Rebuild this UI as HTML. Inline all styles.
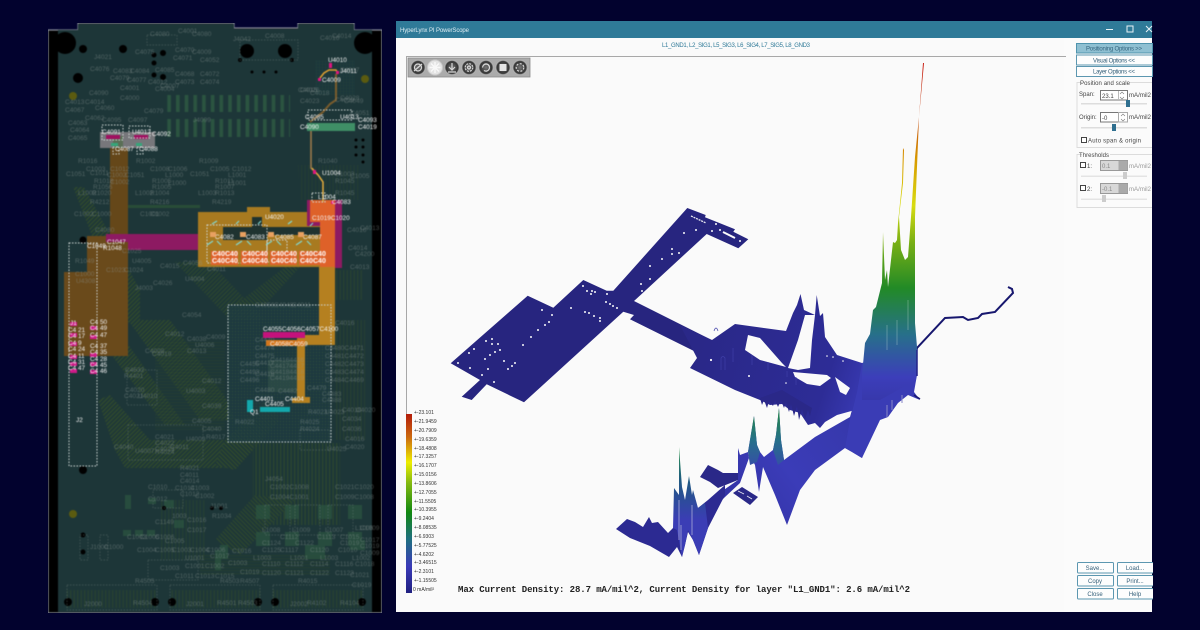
<!DOCTYPE html>
<html><head><meta charset="utf-8"><style>
html,body{margin:0;padding:0;width:1200px;height:630px;overflow:hidden;background:#02022e}
svg{display:block}
text{font-family:"Liberation Sans",sans-serif}
.f text{font-size:6.6px;fill:#8d9a96;fill-opacity:.45}
.w text{font-size:6.4px;fill:#f4f4f4}
.d{fill:none;stroke:#d0d8d6;stroke-width:1;stroke-dasharray:1.5 1.5}
.dg{fill:none;stroke:#75857f;stroke-width:.7;stroke-dasharray:1.5 1.5;opacity:.5}
.b{fill:#fdfdfd;stroke:#5c97b0;stroke-width:1}
.t{font-size:6px;fill:#35607a;text-anchor:middle}
.s{font-size:6px;fill:#444}
.l{font-size:5px;fill:#333}
.h circle{fill:#fafafa}
</style></head><body>
<svg width="1200" height="630" viewBox="0 0 1200 630" xmlns="http://www.w3.org/2000/svg">
<defs>
<filter id="soft" x="0" y="0" width="100%" height="100%" color-interpolation-filters="sRGB"><feGaussianBlur stdDeviation=".4"/></filter>
<pattern id="dg" width="3" height="3" patternUnits="userSpaceOnUse" patternTransform="rotate(45)"><rect width="3" height="3" fill="#1d3638"/><rect width="1.3" height="3" fill="#3f5a25"/></pattern>
<pattern id="dg2" width="3" height="3" patternUnits="userSpaceOnUse" patternTransform="rotate(-45)"><rect width="3" height="3" fill="#1d3638"/><rect width="1.3" height="3" fill="#3f5a25"/></pattern>
<pattern id="vs" width="3.5" height="4" patternUnits="userSpaceOnUse"><rect width="3.5" height="4" fill="#1d3638"/><rect width="1.4" height="4" fill="#3f5a25"/></pattern>
<pattern id="hs" width="4" height="3" patternUnits="userSpaceOnUse"><rect width="4" height="3" fill="#1d3638"/><rect width="4" height="1.3" fill="#3a5526"/></pattern>
<pattern id="dots" width="3" height="3" patternUnits="userSpaceOnUse"><rect width="3" height="3" fill="#1d3a40"/><circle cx="1.5" cy="1.5" r=".7" fill="#2c4a3e"/></pattern>
<pattern id="bars" width="8.7" height="20" patternUnits="userSpaceOnUse"><rect width="8.7" height="20" fill="#1d3638"/><rect x="2" width="3.6" height="20" fill="#2b5440"/></pattern>
<linearGradient id="leg" x1="0" y1="0" x2="0" y2="1">
<stop offset="0" stop-color="#b31c0a"/><stop offset=".13" stop-color="#cc6a10"/><stop offset=".27" stop-color="#eeee00"/><stop offset=".38" stop-color="#88bb10"/><stop offset=".55" stop-color="#118811"/><stop offset=".7" stop-color="#1f6f80"/><stop offset=".85" stop-color="#3a3ab8"/><stop offset="1" stop-color="#202080"/></linearGradient>
<linearGradient id="sp" gradientUnits="userSpaceOnUse" x1="0" y1="63" x2="0" y2="420">
<stop offset="0" stop-color="#c81a10"/><stop offset=".14" stop-color="#c0400f"/><stop offset=".27" stop-color="#d89a00"/><stop offset=".4" stop-color="#d8dc10"/><stop offset=".5" stop-color="#7ab014"/><stop offset=".63" stop-color="#228a26"/><stop offset=".76" stop-color="#27708a"/><stop offset=".88" stop-color="#3c3eba"/><stop offset="1" stop-color="#33339f"/></linearGradient>
<linearGradient id="sp2" gradientUnits="userSpaceOnUse" x1="0" y1="408" x2="0" y2="480">
<stop offset="0" stop-color="#1f8a3a"/><stop offset=".45" stop-color="#27708a"/><stop offset="1" stop-color="#3b3db5"/></linearGradient>
<linearGradient id="sp3" gradientUnits="userSpaceOnUse" x1="0" y1="447" x2="0" y2="520">
<stop offset="0" stop-color="#2f9a50"/><stop offset=".45" stop-color="#1e5a80"/><stop offset="1" stop-color="#3b3db5"/></linearGradient>
<linearGradient id="mass" gradientUnits="userSpaceOnUse" x1="700" y1="340" x2="880" y2="400">
<stop offset="0" stop-color="#2a2888"/><stop offset=".7" stop-color="#2d2c96"/><stop offset="1" stop-color="#3d3fbe"/></linearGradient>
<linearGradient id="band" gradientUnits="userSpaceOnUse" x1="700" y1="520" x2="860" y2="400">
<stop offset="0" stop-color="#2f2e9c"/><stop offset=".5" stop-color="#3b3cb8"/><stop offset="1" stop-color="#3537a8"/></linearGradient>
<radialGradient id="ico" cx=".5" cy=".5" r=".5"><stop offset="0" stop-color="#777"/><stop offset=".8" stop-color="#333"/><stop offset="1" stop-color="#c8c8c8"/></radialGradient>
</defs>
<rect width="1200" height="630" fill="#02022e"/>

<!-- PCB -->
<g filter="url(#soft)">
<path d="M48 30H78V23H234V28H298V23H354V30H382V613H48Z" fill="#000" stroke="#8b8f9c" stroke-width="1.2"/>
<path d="M58 30H78V24H234V29H298V24H354V30H372V612H58Z" fill="#1d3638"/>

<g opacity=".6">
<path d="M73 187L84 187L140 290L140 330L125 320Z" fill="url(#dg)"/>
<path d="M128 320L170 320L225 397L235 420L200 420Z" fill="url(#dg)"/>
<path d="M100 340L125 340L185 425L165 425Z" fill="url(#dg)"/>
<path d="M98 400L110 395L150 440L225 440L225 468L125 468L115 450Z" fill="url(#dg)"/>
<path d="M215 465L225 440L266 400L280 420L235 470Z" fill="url(#dg2)"/>
<path d="M253 443H340V525H253Z" fill="url(#vs)" opacity=".7"/>
<path d="M215 540L255 495L295 500L240 555Z" fill="url(#dg2)" opacity=".8"/>
<path d="M175 262L210 262L265 320L230 320Z" fill="url(#dg)" opacity=".7"/>
<path d="M285 267L300 267L265 305L235 305Z" fill="url(#dg2)" opacity=".7"/>
<path d="M335 270H362V300H335Z" fill="url(#vs)" opacity=".5"/>
<path d="M335 320H365V440H335Z" fill="url(#vs)" opacity=".45"/>
<path d="M155 340H225V430H155Z" fill="url(#hs)" opacity=".35"/>
<path d="M67 590H157V608H67ZM170 590H260V608H170ZM273 590H363V608H273Z" fill="url(#vs)" opacity=".5"/>
<path d="M200 555H330V575H200Z" fill="url(#hs)" opacity=".4"/>
<path d="M160 500H205V560H160Z" fill="url(#vs)" opacity=".35"/>
<path d="M298 165L360 165L360 200L300 200Z" fill="url(#vs)" opacity=".28"/>
<path d="M315 60H355V95H315Z" fill="url(#dots)" opacity=".7"/>
<path d="M128 205H200V208H128Z" fill="#3f7a35" opacity=".55"/>
</g>
<rect x="167" y="95" width="123" height="17" fill="url(#bars)"/>
<rect x="167" y="119" width="123" height="18" fill="url(#bars)"/>
<g fill="#2b5440" opacity=".75">
<rect x="256" y="505" width="14" height="14"/><rect x="285" y="505" width="14" height="14"/><rect x="318" y="505" width="14" height="14"/><rect x="348" y="505" width="14" height="14"/>
<rect x="256" y="532" width="14" height="14"/><rect x="285" y="532" width="14" height="14"/><rect x="318" y="532" width="14" height="14"/><rect x="348" y="532" width="14" height="14"/>
<rect x="164" y="500" width="10" height="8"/><rect x="174" y="520" width="10" height="8"/><rect x="125" y="501" width="6" height="8"/><rect x="125" y="495" width="6" height="8"/><rect x="148" y="498" width="8" height="6"/>
<rect x="123" y="530" width="8" height="6"/><rect x="135" y="530" width="8" height="6"/><rect x="147" y="530" width="8" height="6"/>
<rect x="220" y="545" width="8" height="14"/><rect x="215" y="550" width="6" height="20"/><rect x="305" y="545" width="20" height="14"/><rect x="350" y="540" width="15" height="10"/>
</g>
<rect x="228" y="305" width="103" height="137" fill="url(#dots)" opacity=".85"/>
<rect x="268" y="360" width="37" height="32" fill="#3c5c50" opacity=".4"/>

<path d="M64 272H87V236H128V153H110V236H87V272H64V356H128V272Z" fill="#6a4a1b"/>
<rect x="110" y="148" width="18" height="90" fill="#654719"/>
<rect x="87" y="236" width="41" height="40" fill="#6a4a1b"/>
<rect x="64" y="272" width="64" height="84" fill="#6a4a1b"/>
<path d="M106 234H200V250H128V242H106Z" fill="#8d1a62"/>
<rect x="100" y="132" width="55" height="16" fill="#77777b"/>
<rect x="113" y="136" width="10" height="12" fill="#5a6f56"/>
<path d="M198 212H247V207H270V212H320V267H198Z" fill="#a87a20"/>
<path d="M223 227H252V217H262V227H322V235H267V240H223Z" fill="#1f3330"/>
<path d="M307 200H342V268H335V226H307Z" fill="#8d1a62"/>
<path d="M310 200H335V268H320V222H310Z" fill="#de6129"/>
<path d="M319 267H335V345H305V397L310 397V403H292V398H297V335H319Z" fill="#b58020"/>
<rect x="247" y="400" width="6" height="12" fill="#13a8ac"/>
<rect x="260" y="407" width="30" height="5" fill="#13a8ac"/>
<rect x="263" y="332" width="42" height="6" fill="#c4127c"/>
<rect x="266" y="340" width="39" height="6" fill="#d6761a"/>
<rect x="307" y="123" width="48" height="8" fill="#3f8f66"/>
<rect x="106" y="135" width="14" height="4" fill="#a01060"/>
<rect x="134" y="135" width="14" height="4" fill="#a01060"/>
<rect x="111" y="143" width="7" height="3" fill="#35a67a"/>
<rect x="136" y="143" width="6" height="3" fill="#35a67a"/>
<path d="M336 74V100L330 104L323 112L310 122" fill="none" stroke="#7a5c2c" stroke-width="2"/>
<path d="M320 78L324 73L329 70H336L338 74" fill="none" stroke="#e0a030" stroke-width="1.5"/>
<path d="M311 131V168L318 175L323 182V202" fill="none" stroke="#9c7a4a" stroke-width="1.6"/>
<path d="M312 168L319 176L323 182V202" fill="none" stroke="#e8b038" stroke-width="1.2"/>
<g fill="#e0157f"><rect x="329" y="63" width="3" height="5"/><rect x="336" y="71" width="3" height="3"/><rect x="318" y="78" width="3" height="3"/><rect x="313" y="170" width="3" height="4"/><rect x="331" y="201" width="3" height="3"/></g>
<g fill="#cf1a88"><rect x="70" y="322" width="7" height="4"/><rect x="70" y="333" width="7" height="4"/><rect x="70" y="342" width="7" height="4"/><rect x="70" y="355" width="7" height="4"/><rect x="70" y="362" width="7" height="4"/><rect x="70" y="369" width="7" height="4"/><rect x="90" y="326" width="7" height="4"/><rect x="90" y="335" width="7" height="4"/><rect x="90" y="353" width="7" height="4"/><rect x="90" y="362" width="7" height="4"/><rect x="90" y="370" width="7" height="4"/></g>

<g fill="#000">
<circle cx="65" cy="43" r="11"/><circle cx="365" cy="43" r="11"/>
<circle cx="83" cy="49" r="4"/><circle cx="123" cy="49" r="4"/>
<circle cx="247" cy="51" r="7"/><circle cx="285" cy="51" r="7"/>
<circle cx="78" cy="78" r="5"/><circle cx="83" cy="240" r="3.5"/><circle cx="83" cy="470" r="4"/>
<circle cx="68" cy="602" r="4"/><circle cx="155" cy="602" r="4"/><circle cx="172" cy="602" r="4"/><circle cx="258" cy="602" r="4"/><circle cx="275" cy="602" r="4"/><circle cx="362" cy="602" r="4"/>
<circle cx="83" cy="535" r="2.5"/><circle cx="83" cy="552" r="2.5"/>
<circle cx="164" cy="508" r="2"/><circle cx="212" cy="508" r="2"/><circle cx="221" cy="508" r="2"/>
<circle cx="154" cy="55" r="2.5"/><circle cx="154" cy="63" r="2.5"/><circle cx="154" cy="75" r="2.5"/><circle cx="163" cy="53" r="3"/><circle cx="163" cy="77" r="3"/>
<circle cx="240" cy="60" r="2"/><circle cx="292" cy="60" r="2"/>
<circle cx="252" cy="72" r="1.5"/><circle cx="264" cy="72" r="1.5"/><circle cx="276" cy="72" r="1.5"/>
<circle cx="363" cy="140" r="1.5"/><circle cx="363" cy="147" r="1.5"/><circle cx="363" cy="155" r="1.5"/><circle cx="363" cy="162" r="1.5"/><circle cx="356" cy="140" r="1.5"/><circle cx="356" cy="147" r="1.5"/><circle cx="356" cy="155" r="1.5"/>
</g>
<g fill="#5b5b10"><circle cx="73" cy="96" r="4"/><circle cx="73" cy="514" r="4"/><circle cx="365" cy="79" r="4"/></g>

<g class="f">
<text x="150" y="36">C4080</text><text x="178" y="33">C4001</text><text x="192" y="36">C4080</text><text x="233" y="41">J4042</text><text x="265" y="38">C4008</text><text x="320" y="40">C4016</text><text x="332" y="38">C4014</text>
<text x="94" y="59">J4021</text><text x="135" y="54">C4075</text><text x="175" y="52">C4070</text><text x="192" y="54">C4009</text><text x="173" y="60">C4071</text><text x="200" y="62">C4052</text><text x="90" y="71">C4076</text><text x="113" y="73">C4083</text><text x="130" y="73">C4084</text><text x="155" y="72">C4085</text><text x="200" y="76">C4072</text><text x="175" y="76">C4068</text><text x="110" y="80">C4079</text><text x="127" y="82">C4077</text><text x="148" y="84">C4012</text><text x="175" y="84">C4073</text><text x="200" y="84">C4074</text><text x="160" y="88">C4007</text>
<text x="120" y="90">C4001</text><text x="155" y="91">C4004</text><text x="89" y="95">C4090</text><text x="120" y="100">C4000</text><text x="65" y="104">C4013</text><text x="85" y="104">C4014</text><text x="95" y="110">C4060</text><text x="144" y="113">C4079</text><text x="65" y="112">C4067</text><text x="85" y="120">C4062</text><text x="68" y="125">C4063</text><text x="70" y="132">C4064</text><text x="68" y="140">C4065</text><text x="102" y="122">C4095</text><text x="128" y="122">C4097</text><text x="193" y="122">J4099</text>
<text x="298" y="92">C4015</text><text x="310" y="95">C4018</text><text x="340" y="100">C4028</text><text x="300" y="103">C4023</text><text x="335" y="102">C4029</text><text x="344" y="103">C4049</text><text x="350" y="115">C4051</text><text x="300" y="92">C4026</text><text x="340" y="72">C4017</text>
<text x="78" y="163">R1016</text><text x="136" y="163">R1002</text><text x="199" y="163">R1009</text><text x="318" y="163">R1040</text>
<text x="86" y="171">C1003</text><text x="110" y="171">C1012</text><text x="150" y="171">C1008</text><text x="168" y="171">C1006</text><text x="232" y="171">C1012</text><text x="210" y="171">C1005</text>
<text x="66" y="176">C1051</text><text x="90" y="175">C1011</text><text x="107" y="177">C1002</text><text x="125" y="177">C1051</text><text x="165" y="177">L1000</text><text x="190" y="176">C1051</text><text x="228" y="177">L1001</text><text x="335" y="176">C1003</text><text x="350" y="178">C1005</text>
<text x="94" y="183">R1018</text><text x="152" y="183">R1005</text><text x="215" y="183">R1011</text><text x="335" y="183">R1045</text>
<text x="93" y="189">R1056</text><text x="110" y="184">C1002</text><text x="152" y="189">R1005</text><text x="168" y="185">L1000</text><text x="215" y="189">R1007</text><text x="228" y="185">L1001</text>
<text x="78" y="195">L1002</text><text x="92" y="195">R1020</text><text x="135" y="195">L1002</text><text x="150" y="195">R1004</text><text x="198" y="195">L1003</text><text x="215" y="195">R1013</text><text x="335" y="195">R1045</text>
<text x="90" y="204">R4212</text><text x="150" y="204">R4216</text><text x="212" y="204">R4219</text>
<text x="74" y="216">C1002</text><text x="92" y="216">C1000</text><text x="140" y="216">C1001</text><text x="150" y="216">C1002</text>
<text x="347" y="232">C4016</text><text x="360" y="230">C4013</text><text x="95" y="232">C4080</text>
<text x="348" y="250">C4014</text><text x="355" y="256">C4200</text><text x="350" y="269">C4013</text>
<text x="122" y="253">C1025</text><text x="132" y="263">U4005</text><text x="75" y="263">R1049</text><text x="106" y="272">C1023</text><text x="124" y="272">C1024</text>
<text x="75" y="276">C1000</text><text x="76" y="283">U4308</text><text x="160" y="268">C4015</text><text x="183" y="265">C4056</text><text x="207" y="271">C4011</text><text x="185" y="281">U4004</text><text x="153" y="285">C4026</text><text x="135" y="290">J4003</text>
<text x="182" y="317">C4054</text><text x="255" y="307">C4056</text><text x="274" y="307">C4048</text><text x="292" y="307">C4011</text><text x="335" y="325">C4016</text>
<text x="165" y="336">C4012</text><text x="187" y="341">C4038</text><text x="206" y="339">C4009</text><text x="195" y="347">U4006</text><text x="145" y="353">C4008</text><text x="152" y="356">C4019</text><text x="187" y="353">C4013</text>
<text x="255" y="342">C4470</text><text x="255" y="350">C4474</text><text x="255" y="358">C4475</text><text x="255" y="365">C4417</text><text x="240" y="366">C4455</text><text x="240" y="374">C4493</text><text x="255" y="376">C4418</text><text x="240" y="382">C4496</text><text x="255" y="392">C4480</text><text x="278" y="393">C4482</text>
<g opacity=".85"><text x="270" y="362">C44164416</text><text x="270" y="368">C44174417</text><text x="270" y="374">C44184418</text><text x="270" y="380">C44194419</text></g>
<text x="325" y="350">C4480C4471</text><text x="325" y="358">C4481C4472</text><text x="325" y="366">C4482C4473</text><text x="325" y="374">C4483C4474</text><text x="325" y="382">C4484C4469</text><text x="307" y="390">C4479</text><text x="322" y="396">C4483</text><text x="322" y="402">C4488</text>
<text x="125" y="372">C4532</text><text x="124" y="378">R4401</text><text x="125" y="392">C4020</text><text x="124" y="398">C4021</text><text x="138" y="398">U4010</text>
<text x="202" y="383">C4012</text><text x="186" y="393">U4003</text><text x="202" y="408">C4039</text><text x="192" y="423">C4005</text><text x="202" y="431">C4040</text><text x="206" y="439">R4017</text><text x="235" y="424">R4022</text>
<text x="186" y="441">U4009</text><text x="155" y="439">C4021</text><text x="155" y="445">C4022</text><text x="155" y="451">C4023</text><text x="170" y="449">C4011</text><text x="155" y="454">R4024</text><text x="114" y="449">C4040</text><text x="135" y="453">U4007</text>
<text x="308" y="414">R4023</text><text x="325" y="414">U4023</text><text x="342" y="412">C4018</text><text x="356" y="412">C4020</text><text x="300" y="424">R4025</text><text x="300" y="431">R4024</text><text x="342" y="421">C4034</text><text x="342" y="431">C4036</text><text x="345" y="441">C4016</text><text x="345" y="449">C4020</text><text x="327" y="451">U4025</text>
<text x="180" y="470">R4021</text><text x="180" y="477">C4011</text><text x="180" y="483">C4014</text><text x="175" y="490">C1014</text><text x="190" y="490">C1003</text><text x="148" y="489">C1010</text><text x="148" y="501">C1012</text><text x="180" y="496">C1012</text><text x="195" y="498">C1002</text>
<text x="265" y="481">J4054</text><text x="270" y="489">C1002C1008</text><text x="270" y="499">C1004C1001</text><text x="335" y="489">C1021C1020</text><text x="335" y="499">C1009C1008</text>
<text x="210" y="508">J1001</text><text x="212" y="518">R1034</text><text x="172" y="518">1003</text><text x="155" y="524">C1149</text><text x="187" y="522">C1016</text><text x="187" y="532">C1017</text>
<text x="262" y="532">L1008</text><text x="292" y="532">L1009</text><text x="325" y="532">L1007</text><text x="355" y="530">L1006</text><text x="360" y="530">C1009</text>
<text x="90" y="549">J1000</text><text x="104" y="549">C1000</text><text x="127" y="539">C1003</text><text x="140" y="539">C1005</text><text x="155" y="539">C1006</text><text x="165" y="543">C1005</text>
<text x="280" y="539">C1112</text><text x="317" y="539">C1113</text><text x="340" y="539">C1015</text><text x="360" y="542">C1017</text>
<text x="262" y="545">C1124</text><text x="295" y="545">C1122</text><text x="340" y="545">C1019</text><text x="360" y="548">C1019</text>
<text x="262" y="552">C1125</text><text x="280" y="552">C1117</text><text x="310" y="552">C1120</text><text x="338" y="552">C1010</text><text x="360" y="555">C1009</text>
<text x="137" y="552">C1004</text><text x="155" y="552">C1005</text><text x="172" y="552">C1003</text><text x="190" y="552">C1004</text><text x="206" y="552">C1006</text><text x="232" y="553">C1016</text>
<text x="253" y="560">L1003</text><text x="290" y="560">L1001</text><text x="320" y="560">L1003</text><text x="352" y="560">L1002</text><text x="185" y="560">U1001</text><text x="210" y="558">C1017</text>
<text x="160" y="570">C1003</text><text x="185" y="568">C1001</text><text x="205" y="568">C1002</text><text x="228" y="565">C1003</text><text x="262" y="566">C1110</text><text x="285" y="566">C1112</text><text x="310" y="566">C1114</text><text x="335" y="566">C1116</text><text x="355" y="566">C1018</text>
<text x="175" y="578">C1011</text><text x="195" y="578">C1013</text><text x="215" y="578">C1015</text><text x="240" y="574">C1019</text><text x="262" y="575">C1120</text><text x="285" y="575">C1121</text><text x="310" y="575">C1122</text><text x="335" y="575">C1123</text><text x="350" y="577">C1021</text>
<text x="135" y="583">R4505</text><text x="220" y="583">R4503</text><text x="240" y="583">R4507</text><text x="298" y="583">R4015</text><text x="352" y="587">C1019</text>
<text x="84" y="606">J2000</text><text x="133" y="605">R4504</text><text x="186" y="606">J2001</text><text x="217" y="605">R4501</text><text x="238" y="605">R4503</text><text x="290" y="606">J2002</text><text x="307" y="605">R4102</text><text x="340" y="605">R4104</text>
</g>
<g class="dg">
<rect x="67" y="585" width="90" height="25"/><rect x="170" y="585" width="90" height="25"/><rect x="273" y="585" width="90" height="25"/>
<rect x="128" y="425" width="75" height="35"/><rect x="153" y="490" width="30" height="18"/><rect x="265" y="505" width="25" height="30"/><rect x="295" y="505" width="25" height="30"/><rect x="328" y="505" width="25" height="30"/>
<rect x="240" y="40" width="58" height="20"/><rect x="147" y="35" width="30" height="10"/><rect x="127" y="370" width="30" height="35"/><rect x="300" y="430" width="30" height="20"/>
<rect x="80" y="535" width="8" height="25"/><rect x="100" y="535" width="8" height="25"/><rect x="148" y="560" width="50" height="20"/>
</g>
<g class="d">
<rect x="69" y="243" width="28" height="223"/>
<rect x="228" y="305" width="103" height="137"/>
<rect x="102" y="125" width="21" height="15"/><rect x="129" y="126" width="21" height="12"/>
<rect x="308" y="110" width="44" height="10"/><rect x="312" y="193" width="13" height="9"/>
<rect x="207" y="225" width="60" height="38"/><rect x="267" y="240" width="20" height="22"/>
<rect x="113" y="147" width="6" height="7"/><rect x="137" y="147" width="6" height="7"/>
</g>
<g class="w">
<text x="328" y="62">U4010</text><text x="340" y="73">J4011</text><text x="322" y="82">C4009</text><text x="322" y="175">U1004</text><text x="318" y="199">L1004</text><text x="332" y="204">C4083</text><text x="312" y="220">C1019C1020</text>
<text x="102" y="134">C4091</text><text x="132" y="134">U4012</text><text x="152" y="136">C4092</text><text x="115" y="151">C4087</text><text x="139" y="151">C4088</text>
<text x="300" y="129">C4090</text><text x="305" y="119">C4085</text><text x="340" y="119">U4013</text><text x="358" y="122">C4093</text><text x="358" y="129">C4019</text>
<text x="265" y="219">U4020</text>
<text x="215" y="239">C4082</text><text x="246" y="239">C4083</text><text x="275" y="239">C4085</text><text x="303" y="239">C4087</text>
<text x="107" y="244">C1047</text><text x="87" y="248">C1049</text><text x="103" y="250">R1048</text>
<text x="263" y="331">C4055C4056C4057C4100</text><text x="270" y="346">C4058C4059</text>
<text x="255" y="401">C4401</text><text x="285" y="401">C4404</text><text x="265" y="406">C4405</text><text x="250" y="414">Q1</text><text x="76" y="422">J2</text>
<text x="70" y="325">J1</text><text x="68" y="332">C4 21</text><text x="68" y="338">C4 17</text><text x="68" y="345">C4 9</text><text x="68" y="351">C4 24</text><text x="68" y="358">C4 11</text><text x="68" y="364">C4 31</text><text x="68" y="370">C4 47</text>
<text x="90" y="324">C4 50</text><text x="90" y="330">C4 49</text><text x="90" y="337">C4 47</text><text x="90" y="348">C4 37</text><text x="90" y="354">C4 35</text><text x="90" y="361">C4 28</text><text x="90" y="367">C4 45</text><text x="90" y="373">C4 46</text>
</g>
<g>
<g fill="#e8a060"><rect x="210" y="232" width="6" height="5"/><rect x="240" y="232" width="6" height="5"/><rect x="268" y="232" width="6" height="5"/><rect x="298" y="232" width="6" height="5"/></g>
<g fill="#e0622c"><rect x="211" y="251" width="27" height="14"/><rect x="241" y="251" width="27" height="14"/><rect x="270" y="251" width="27" height="14"/><rect x="299" y="251" width="27" height="14"/></g>
<g fill="#fff" font-weight="bold" font-size="7"><text x="212" y="256">C40</text><text x="225" y="256">C40</text><text x="242" y="256">C40</text><text x="255" y="256">C40</text><text x="271" y="256">C40</text><text x="284" y="256">C40</text><text x="300" y="256">C40</text><text x="313" y="256">C40</text>
<text x="212" y="263">C40</text><text x="225" y="263">C40</text><text x="242" y="263">C40</text><text x="255" y="263">C40</text><text x="271" y="263">C40</text><text x="284" y="263">C40</text><text x="300" y="263">C40</text><text x="313" y="263">C40</text></g>
<path d="M207 245l6-4M221 245l-4-4M236 245l6-4M251 245l-4-4M266 245l6-4M281 245l-4-4M296 245l6-4M311 245l-4-4M212 224l5-3M236 224l3-3M258 224l3-3M288 224l4-3M310 226l3-3" stroke="#7fdcd8" stroke-width="1.1" fill="none"/>
</g>
</g>

<!-- WINDOW -->
<rect x="396" y="21" width="756" height="591" fill="#fafafa"/>
<rect x="396" y="21" width="756" height="17" fill="#2f7a98"/>
<text x="400" y="32" font-size="6" fill="#dcecf2" textLength="69">HyperLynx PI PowerScope</text>
<rect x="1106" y="29" width="7" height="1" fill="#e8f2f6"/>
<rect x="1127" y="26" width="6" height="6" fill="none" stroke="#e8f2f6" stroke-width="1"/>
<path d="M1146 26l6 6M1152 26l-6 6" stroke="#e8f2f6" stroke-width="1" fill="none"/>
<rect x="1064" y="38" width="88" height="574" fill="#fbfbfb"/>
<text x="736" y="47" font-size="6" fill="#2f7a98" text-anchor="middle" textLength="148">L1_GND1, L2_SIG1, L5_SIG3, L6_SIG4, L7_SIG5, L8_GND3</text>
<path d="M406.5 593V56.5H1066" fill="none" stroke="#a8a8a8" stroke-width="1"/>

<rect x="408" y="58" width="122" height="19" fill="#ababab" stroke="#8a8a8a" stroke-width=".8"/>
<g fill="url(#ico)"><circle cx="418" cy="67.5" r="7.5"/><circle cx="452" cy="67.5" r="7.5"/><circle cx="469" cy="67.5" r="7.5"/><circle cx="486" cy="67.5" r="7.5"/><circle cx="503" cy="67.5" r="7.5"/><circle cx="520" cy="67.5" r="7.5"/></g>
<circle cx="435" cy="67.5" r="7.5" fill="#e4e4e4" stroke="#c8c8c8"/>
<path d="M435 62v11M429.500 67.500h11M431 63.500l8 8M439 63.500l-8 8" stroke="#f8f8f8" stroke-width="1.4"/>
<g fill="none" stroke="#d8d8d8" stroke-width="1.2">
<circle cx="418" cy="67.500" r="3.500"/><path d="M414 71l8-7"/>
<path d="M452 63v6M449 67l3 3 3-3M448 72h8"/>
<circle cx="469" cy="67.500" r="3.800" stroke-dasharray="2 1"/><circle cx="469" cy="67.500" r="1.500"/>
<path d="M482.500 67.500a3.500 3.500 0 1 1 1.500 3M489.500 67.500a3.500 3.500 0 0 0-6-2.500"/>
<circle cx="520" cy="67.500" r="3.800" stroke-dasharray="2 1.500"/>
</g>
<rect x="499.500" y="64" width="7" height="7" fill="#e4e4e4"/>

<rect x="406" y="414" width="6" height="179" fill="url(#leg)"/>
<g class="l">
<text x="414" y="414">+-23.101</text><text x="414" y="423">+-21.9459</text><text x="414" y="432">+-20.7909</text><text x="414" y="441">+-19.6359</text><text x="414" y="450">+-18.4808</text><text x="414" y="458">+-17.3257</text><text x="414" y="467">+-16.1707</text><text x="414" y="476">+-15.0156</text><text x="414" y="485">+-13.8606</text><text x="414" y="494">+-12.7055</text><text x="414" y="503">+-11.5505</text><text x="414" y="511">+-10.3955</text><text x="414" y="520">+-9.2404</text><text x="414" y="529">+-8.08535</text><text x="414" y="538">+-6.9303</text><text x="414" y="547">+-5.77525</text><text x="414" y="556">+-4.6202</text><text x="414" y="564">+-3.46515</text><text x="414" y="573">+-2.3101</text><text x="414" y="582">+-1.15505</text><text x="413" y="591">0 mA/mil²</text>
</g>
<text x="458" y="592" font-size="9" font-weight="bold" fill="#222" style="font-family:'Liberation Mono',monospace" textLength="452">Max Current Density: 28.7 mA/mil^2, Current Density for layer "L1_GND1": 2.6 mA/mil^2</text>

<!-- 3D: flat plane -->
<path fill="#27257f" d="M450.700 363.300L527.700 295.700L553.300 307.700L583.300 280L606.700 290.700L613.300 290.700L687.300 208L705.700 215L705 217.300L735 229.300L733.300 231.700L748.300 239.300L738.300 248.300L706.700 234L634 301L711.700 340L700 354L630 319.300L634 315L623.300 311.700L524 402.300L486.700 384.300L471.700 400L461.700 396.700L480 380Z"/>
<g class="h">
<circle cx="458" cy="363" r="1"/><circle cx="469" cy="353" r="1"/><circle cx="474" cy="349" r="1"/><circle cx="485" cy="359" r="1"/><circle cx="488" cy="369" r="1"/><circle cx="470" cy="368" r="1"/><circle cx="486" cy="341" r="1"/><circle cx="492" cy="344" r="1"/><circle cx="490" cy="355" r="1"/><circle cx="495" cy="352" r="1"/><circle cx="500" cy="350" r="1"/><circle cx="492" cy="339" r="1"/><circle cx="498" cy="344" r="1"/><circle cx="504" cy="361" r="1"/><circle cx="508" cy="369" r="1"/><circle cx="512" cy="366" r="1"/><circle cx="515" cy="363" r="1"/><circle cx="482" cy="375" r="1"/><circle cx="494" cy="382" r="1"/><circle cx="523" cy="345" r="1"/><circle cx="531" cy="337" r="1"/><circle cx="538" cy="330" r="1"/><circle cx="545" cy="325" r="1"/><circle cx="549" cy="322" r="1"/><circle cx="552" cy="315" r="1"/><circle cx="542" cy="310" r="1"/><circle cx="571" cy="308" r="1"/><circle cx="585" cy="312" r="1"/><circle cx="589" cy="313" r="1"/><circle cx="594" cy="316" r="1"/><circle cx="600" cy="318" r="1"/><circle cx="600" cy="321" r="1"/><circle cx="583" cy="286" r="1"/><circle cx="587" cy="291" r="1"/><circle cx="591" cy="294" r="1"/><circle cx="592" cy="291" r="1"/><circle cx="595" cy="292" r="1"/><circle cx="606" cy="302" r="1"/><circle cx="610" cy="304" r="1"/><circle cx="613" cy="306" r="1"/><circle cx="617" cy="308" r="1"/><circle cx="607" cy="294" r="1"/><circle cx="641" cy="284" r="1"/><circle cx="642" cy="291" r="1"/><circle cx="650" cy="279" r="1"/><circle cx="650" cy="266" r="1"/><circle cx="662" cy="259" r="1"/><circle cx="672" cy="249" r="1"/><circle cx="679" cy="253" r="1"/><circle cx="672" cy="254" r="1"/><circle cx="684" cy="233" r="1"/><circle cx="696" cy="230" r="1"/><circle cx="716" cy="224" r="1"/><circle cx="712" cy="231" r="1"/><circle cx="720" cy="230" r="1"/><circle cx="740" cy="241" r="1"/>
</g>
<path d="M691 216L706 223" stroke="#e8e8f0" stroke-width="1.300" stroke-dasharray="2 .8"/>
<path d="M723 232L735 238" stroke="#fafafa" stroke-width="2"/>

<!-- thin line -->
<path d="M912 372L917 348L945 318L963 317L968 320L978 318L982 314L995 312L1013 293L1012 289L1008 287" fill="none" stroke="#17176e" stroke-width="2"/>

<!-- mass -->
<path fill="url(#mass)" fill-rule="evenodd" d="M680 325L712 340L735 324L786 331L793 313L797 305L800.500 294L804 310L815 315L816.700 295L820 316L823 313L825 337L837 355L862 363L868 395L855 410L837 415L825 422L820 428L815 423L808 425L800 413L790 410L782 404L770 405L760 400L750 396L735 390L690 368L697 358Z
M748 335L760 338L782 363L786 367L760 360L745 350Z
M805 315L815 315L812 340L810 368L798 370L788 368L798 340Z
M793 372L827 375L831 378L820 386L807 384L795 377Z
M835 377L850 388L846 395L840 392Z"/>
<path fill="#2a2888" d="M760 398l2 7 2-5 3 8 2-7 4 5 2-6 3 7 3-7 3 8 2-6 3 10 2-8 3 12 3-10 2 14 3-11 3 10 3-9 2 6 2-8-30-18z"/>
<path fill="none" stroke="#3f3fa8" stroke-width=".7" d="M714 331q2-6 4 0M721 370v-12q2-3 4 0v12M733 362v-14M752 365v-10M768 370v-8M787 377v-6M796 385v-8"/>
<g fill="#fafafa"><circle cx="711" cy="360" r="1.100"/><circle cx="749" cy="376" r="1"/><circle cx="786" cy="383" r=".8"/><circle cx="827" cy="356" r=".8"/><circle cx="833" cy="357" r=".8"/><circle cx="843" cy="361" r=".8"/></g>

<!-- lower band: right part -->
<path fill="url(#band)" d="M748 452L754 416L757 445L760 452L764 457L773 450L776 435L779 408L781 440L784 460L815 437L850 417L857 392L860 365L880 400L862 458L852 452L845 448L815 470L800 490L787 525L775 495L763 467L759 492L755 465Z"/>
<path fill="url(#sp2)" d="M748 452L754 416L757 445L760 452L757 462L750 465Z"/>
<path fill="url(#sp2)" d="M773 450L776 435L779 408L781 440L784 460L778 465Z"/>
<!-- lower band: left part -->
<path fill="url(#band)" d="M698 508L738 480L738 448L740 455L748 452L749 458L740 483L725 497L710 512L703 533L695 530Z"/>
<!-- right body under spikes -->
<path fill="#3a3cb5" d="M857 392L862 363L916 345L917 375L914 392L920 400L908 395L898 403L888 417L880 420L862 458L852 452L845 448L850 420Z"/>

<!-- bottom-left piece -->
<path fill="#2c2a92" d="M616 529L627 519L635 522L643 527L649 517L652 523L658 522L668 533L673 528L680 510L690 510L698 508L708 500L725 485L725 495L708 528L699 555L693 540L688 532L685 545L682 557L677 547L669 557L650 546L630 538Z"/>
<path fill="url(#sp3)" d="M673 528L674 488L679 495L679 447L682 487L685 500L689 476L692 495L693 490L698 508L705 503L708 528L699 555L693 540L688 530L685 545L682 557L677 530Z"/>
<path fill="#2a2888" d="M700 477L708 465L718 470L723 473L738 473L738 480L718 488L710 482Z"/>
<path fill="#2a2888" d="M733 493L742 487L758 497L750 505Z"/>
<path d="M738 491l6 3M747 496l5 3" stroke="#e8e8f4" stroke-width=".8"/>
<path d="M679 500v40M692 505v30M681 525v25" stroke="#a8a8d8" stroke-width=".8" fill="none"/>

<!-- spikes -->
<path fill="url(#sp)" d="M862 375L865 343L870 334L873 310L876 307L882 283L883 232L885 280L887 270L888 287L893 242L895 243L897 240L898 223L902 183L903 148L904 150L903 183L899 217L901 250L905 260L908 257L911 217L915 157L919 117L923 63L924 63L919 117L917 167L915 217L915 323L917 347L916 380L880 400L862 400Z"/>
<path d="M917 350V376" stroke="#222288" stroke-width="1.500"/>
<path d="M887 325v25M897 320v25M908 300v30" stroke="#d8e8e0" stroke-width=".6" opacity=".5"/>
<path d="M914 395l6 4" stroke="#17176e" stroke-width="1.500"/>
<path d="M887 405v12M892 400v10M902 395v8" stroke="#8888c8" stroke-width="1"/>

<!-- right panel -->
<rect x="1076.500" y="43.500" width="76" height="9.500" fill="#8fc0d2" stroke="#4f94ae"/>
<text class="t" x="1114" y="50.500" style="fill:#34647e" textLength="56">Positioning Options &gt;&gt;</text>
<rect class="b" x="1076.500" y="55" width="76" height="10"/>
<text class="t" x="1114" y="62.500" textLength="42">Visual Options &lt;&lt;</text>
<rect class="b" x="1076.500" y="66.500" width="76" height="10"/>
<text class="t" x="1114" y="73.500" textLength="42">Layer Options &lt;&lt;</text>

<path d="M1082 82.500H1077V147.500H1152M1130 82.500H1152" fill="none" stroke="#dcdcdc"/>
<text class="s" x="1080" y="85" textLength="50">Position and scale</text>
<text class="s" x="1079" y="96">Span:</text>
<rect x="1100.500" y="90.500" width="27" height="9.500" fill="#fff" stroke="#777"/>
<text class="s" x="1102" y="98">23.1</text>
<path d="M1118.500 91v9" stroke="#bbb"/><path d="M1120 94l2-2 2 2M1120 97l2 2 2-2" fill="none" stroke="#777" stroke-width=".6"/>
<text class="s" x="1129" y="97" textLength="22">mA/mil2</text>
<rect x="1081" y="103" width="66" height="1.500" fill="#ddd"/>
<rect x="1126" y="100" width="4" height="7" fill="#2f6f8f"/>
<text class="s" x="1079" y="119">Origin:</text>
<rect x="1100.500" y="112.500" width="18" height="9.500" fill="#fff" stroke="#777"/>
<rect x="1118.500" y="112.500" width="9" height="9.500" fill="#fff" stroke="#aaa"/>
<text class="s" x="1102" y="120">-0</text>
<path d="M1121 116l2-2 2 2M1121 119l2 2 2-2" fill="none" stroke="#777" stroke-width=".6"/>
<text class="s" x="1129" y="119" textLength="22">mA/mil2</text>
<rect x="1081" y="127" width="66" height="1.500" fill="#ddd"/>
<rect x="1112" y="124" width="4" height="7" fill="#2f6f8f"/>
<rect x="1081.500" y="137.500" width="5" height="5" fill="#fff" stroke="#444"/>
<text class="s" x="1088" y="142.500" textLength="53">Auto span &amp; origin</text>

<path d="M1082 154.500H1077V207.500H1152M1110 154.500H1152" fill="none" stroke="#dcdcdc"/>
<text class="s" x="1079" y="157" textLength="30">Thresholds</text>
<rect x="1080.500" y="162.500" width="5" height="5" fill="#fff" stroke="#444"/>
<text class="s" x="1087" y="168">1:</text>
<rect x="1100.500" y="160.500" width="27" height="10" fill="#d8d8d8" stroke="#999"/>
<text class="s" x="1102" y="168" style="fill:#888">0.1</text>
<rect x="1118.500" y="161" width="9" height="9" fill="#aaa"/>
<text class="s" x="1129" y="168" textLength="22" style="fill:#999">mA/mil2</text>
<rect x="1081" y="175.500" width="66" height="1.500" fill="#e4e4e4"/>
<rect x="1123" y="172" width="4" height="7" fill="#ccc"/>
<rect x="1080.500" y="185.500" width="5" height="5" fill="#fff" stroke="#444"/>
<text class="s" x="1087" y="191">2:</text>
<rect x="1100.500" y="183.500" width="27" height="10" fill="#d8d8d8" stroke="#999"/>
<text class="s" x="1102" y="191" style="fill:#888">-0.1</text>
<rect x="1118.500" y="184" width="9" height="9" fill="#aaa"/>
<text class="s" x="1129" y="191" textLength="22" style="fill:#999">mA/mil2</text>
<rect x="1081" y="198.500" width="66" height="1.500" fill="#e4e4e4"/>
<rect x="1102" y="195" width="4" height="7" fill="#ccc"/>

<rect class="b" x="1077.500" y="562.500" width="36" height="10.500" rx="1"/><text class="t" x="1095" y="570">Save...</text>
<rect class="b" x="1117.500" y="562.500" width="36" height="10.500" rx="1"/><text class="t" x="1135" y="570">Load...</text>
<rect class="b" x="1077.500" y="575.500" width="36" height="10.500" rx="1"/><text class="t" x="1095" y="583">Copy</text>
<rect class="b" x="1117.500" y="575.500" width="36" height="10.500" rx="1"/><text class="t" x="1135" y="583">Print...</text>
<rect class="b" x="1077.500" y="588.500" width="36" height="10.500" rx="1"/><text class="t" x="1095" y="596">Close</text>
<rect class="b" x="1117.500" y="588.500" width="36" height="10.500" rx="1"/><text class="t" x="1135" y="596">Help</text>
<rect x="1153" y="15" width="47" height="610" fill="#02022e"/>
</svg>
</body></html>
